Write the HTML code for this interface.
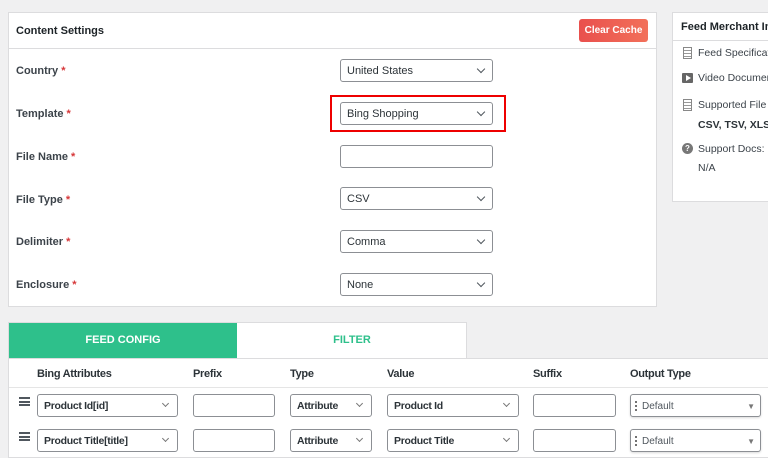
<!DOCTYPE html>
<html><head><style>
*{box-sizing:border-box;margin:0;padding:0}
body{width:768px;height:449px;overflow:hidden;background:#f0f0f1;font-family:"Liberation Sans",sans-serif;color:#3c434a;position:relative}
.a{position:absolute}
.panel{background:#fff;border:1px solid #dcdcde}
.lbl{position:absolute;left:16px;font-size:11px;font-weight:bold;color:#3c434a}
.lbl i{color:#d63638;font-style:normal}
.sel{position:absolute;left:340px;width:153px;height:23px;border:1px solid #8c8f94;border-radius:3px;background:#fff;font-size:11px;line-height:23px;padding-left:6px;color:#2c3338}
.sel.c:after{content:"";position:absolute;right:8px;top:6px;width:5px;height:5px;border-right:1.5px solid #50575e;border-bottom:1.5px solid #50575e;transform:rotate(45deg)}
.th{position:absolute;top:368px;font-size:11px;font-weight:bold;color:#2c3338;letter-spacing:-.3px}
.in{position:absolute;height:23px;border:1px solid #8c8f94;border-radius:3px;background:#fff;font-size:10.5px;font-weight:bold;line-height:23px;padding-left:6px;color:#2c3338;letter-spacing:-.3px}
.in.c:after{content:"";position:absolute;right:9px;top:6px;width:4px;height:4px;border-right:1px solid #777;border-bottom:1px solid #777;transform:rotate(45deg)}
.dd{position:absolute;left:630px;width:131px;height:23px;border:1px solid #8c8f94;border-radius:3px;background:#fff;font-size:10px;line-height:23px;padding-left:11px;color:#50575e;box-shadow:0 1px 2px rgba(0,0,0,.15)}
.dd:before{content:"";position:absolute;left:4px;top:5px;width:2px;height:11px;background:radial-gradient(circle,#666 1px,transparent 1.2px) 0 0/2px 4px repeat-y}
.dd:after{content:"▼";position:absolute;right:5px;top:0;font-size:8px;color:#777}
.hb{position:absolute;left:19px;width:11px;height:9px;border-top:2px solid #50575e;border-bottom:2px solid #50575e}
.hb:after{content:"";position:absolute;left:0;right:0;top:1.5px;border-top:2px solid #50575e}
.ri{position:absolute;left:698px;font-size:10.5px;color:#3c434a;white-space:nowrap}
</style></head><body>
<div class="a panel" style="left:8px;top:12px;width:649px;height:295px"></div>
<div class="a" style="left:9px;top:48px;width:647px;border-top:1px solid #dcdcde"></div>
<div class="a" style="left:16px;top:25px;font-size:11px;font-weight:bold;color:#1d2327">Content Settings</div>
<div class="a" style="left:579px;top:19px;width:69px;height:23px;background:linear-gradient(90deg,#e9504d,#f2705a);border-radius:3px;color:#fff;font-size:10px;font-weight:bold;line-height:23px;text-align:center;white-space:nowrap">Clear Cache</div>

<div class="lbl" style="top:65px">Country <i>*</i></div>
<div class="lbl" style="top:108px">Template <i>*</i></div>
<div class="lbl" style="top:151px">File Name <i>*</i></div>
<div class="lbl" style="top:194px">File Type <i>*</i></div>
<div class="lbl" style="top:236px">Delimiter <i>*</i></div>
<div class="lbl" style="top:279px">Enclosure <i>*</i></div>

<div class="sel c" style="top:59px">United States</div>
<div class="a" style="left:330px;top:95px;width:176px;height:37px;border:2px solid #ee0000"></div>
<div class="sel c" style="top:102px">Bing Shopping</div>
<div class="sel" style="top:145px"></div>
<div class="sel c" style="top:187px">CSV</div>
<div class="sel c" style="top:230px">Comma</div>
<div class="sel c" style="top:273px">None</div>

<div class="a panel" style="left:672px;top:12px;width:110px;height:190px"></div>
<div class="a" style="left:673px;top:40px;width:100px;border-top:1px solid #dcdcde"></div>
<div class="a" style="left:681px;top:21px;font-size:11px;font-weight:bold;color:#1d2327;white-space:nowrap">Feed Merchant Info</div>
<div class="a" style="left:683px;top:47px;width:9px;height:12px;border:1px solid #888;background:repeating-linear-gradient(#fff 0 2px,#999 2px 3px)"></div>
<div class="ri" style="top:47px">Feed Specification</div>
<div class="a" style="left:682px;top:73px;width:11px;height:10px;background:#666;border-radius:1px"></div>
<div class="a" style="left:686px;top:75px;width:0;height:0;border-left:5px solid #fff;border-top:3px solid transparent;border-bottom:3px solid transparent"></div>
<div class="ri" style="top:72px">Video Documentation</div>
<div class="a" style="left:683px;top:99px;width:9px;height:12px;border:1px solid #888;background:repeating-linear-gradient(#fff 0 2px,#999 2px 3px)"></div>
<div class="ri" style="top:99px">Supported File Types:</div>
<div class="ri" style="top:119px;font-weight:bold;color:#2c3338">CSV, TSV, XLS, TXT</div>
<div class="a" style="left:682px;top:143px;width:11px;height:11px;border-radius:50%;background:#777;color:#fff;font-size:8px;font-weight:bold;text-align:center;line-height:11px">?</div>
<div class="ri" style="top:143px">Support Docs:</div>
<div class="ri" style="top:162px">N/A</div>

<div class="a" style="left:8px;top:322px;width:459px;height:37px;border:1px solid #dcdcde;background:#fff"></div>
<div class="a" style="left:9px;top:323px;width:228px;height:35px;background:#2ec08b;color:#fff;font-size:11px;font-weight:bold;text-align:center;line-height:35px">FEED CONFIG</div>
<div class="a" style="left:238px;top:323px;width:228px;height:35px;color:#2ec08b;font-size:11px;font-weight:bold;text-align:center;line-height:35px">FILTER</div>
<div class="a" style="left:8px;top:358px;width:770px;height:100px;background:#fff;border:1px solid #dcdcde"></div>
<div class="a" style="left:9px;top:387px;width:760px;border-top:1px solid #e5e5e5"></div>

<div class="th" style="left:37px">Bing Attributes</div>
<div class="th" style="left:193px">Prefix</div>
<div class="th" style="left:290px">Type</div>
<div class="th" style="left:387px">Value</div>
<div class="th" style="left:533px">Suffix</div>
<div class="th" style="left:630px">Output Type</div>

<div class="hb" style="top:397px"></div>
<div class="in c" style="left:37px;top:394px;width:141px">Product Id[id]</div>
<div class="in" style="left:193px;top:394px;width:82px"></div>
<div class="in c" style="left:290px;top:394px;width:82px">Attribute</div>
<div class="in c" style="left:387px;top:394px;width:132px">Product Id</div>
<div class="in" style="left:533px;top:394px;width:83px"></div>
<div class="dd" style="top:394px">Default</div>

<div class="hb" style="top:432px"></div>
<div class="in c" style="left:37px;top:429px;width:141px">Product Title[title]</div>
<div class="in" style="left:193px;top:429px;width:82px"></div>
<div class="in c" style="left:290px;top:429px;width:82px">Attribute</div>
<div class="in c" style="left:387px;top:429px;width:132px">Product Title</div>
<div class="in" style="left:533px;top:429px;width:83px"></div>
<div class="dd" style="top:429px">Default</div>
</body></html>
